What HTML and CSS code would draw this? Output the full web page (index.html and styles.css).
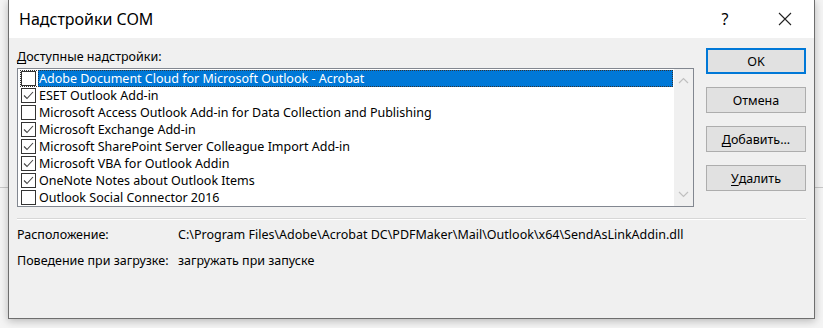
FILE: index.html
```html
<!DOCTYPE html>
<html lang="ru">
<head>
<meta charset="utf-8">
<title>Надстройки COM</title>
<link rel="stylesheet" href="styles.css">
</head>
<body>
<div class="dialog">
  <div class="titlebar">
    <div class="title">Надстройки COM</div>
    <div class="tbtn help">?</div>
    <div class="tbtn close">
      <svg width="14" height="14" viewBox="0 0 14 14"><path d="M1 1 L13 13 M13 1 L1 13" stroke="#222" stroke-width="1.1" fill="none"/></svg>
    </div>
  </div>
  <div class="content">
    <div class="top">
      <div class="leftcol">
        <div class="label"><u>Д</u>оступные надстройки:</div>
        <div class="list">
          <div class="rows">
            <div class="row selected"><span class="cb"></span><span class="txt">Adobe Document Cloud for Microsoft Outlook - Acrobat</span></div>
            <div class="row"><span class="cb"><svg width="13" height="13" viewBox="0 0 13 13"><polyline points="2,6.5 5,9.5 11,3" stroke="#444" stroke-width="1.1" fill="none"/></svg></span><span class="txt">ESET Outlook Add-in</span></div>
            <div class="row"><span class="cb"></span><span class="txt">Microsoft Access Outlook Add-in for Data Collection and Publishing</span></div>
            <div class="row"><span class="cb"><svg width="13" height="13" viewBox="0 0 13 13"><polyline points="2,6.5 5,9.5 11,3" stroke="#444" stroke-width="1.1" fill="none"/></svg></span><span class="txt">Microsoft Exchange Add-in</span></div>
            <div class="row"><span class="cb"><svg width="13" height="13" viewBox="0 0 13 13"><polyline points="2,6.5 5,9.5 11,3" stroke="#444" stroke-width="1.1" fill="none"/></svg></span><span class="txt">Microsoft SharePoint Server Colleague Import Add-in</span></div>
            <div class="row"><span class="cb"><svg width="13" height="13" viewBox="0 0 13 13"><polyline points="2,6.5 5,9.5 11,3" stroke="#444" stroke-width="1.1" fill="none"/></svg></span><span class="txt">Microsoft VBA for Outlook Addin</span></div>
            <div class="row"><span class="cb"><svg width="13" height="13" viewBox="0 0 13 13"><polyline points="2,6.5 5,9.5 11,3" stroke="#444" stroke-width="1.1" fill="none"/></svg></span><span class="txt">OneNote Notes about Outlook Items</span></div>
            <div class="row"><span class="cb"></span><span class="txt">Outlook Social Connector 2016</span></div>
          </div>
          <div class="scrollbar">
            <svg width="11" height="7" viewBox="0 0 11 7"><polyline points="1,6 5.5,1.5 10,6" stroke="#c0c0c0" stroke-width="1.2" fill="none"/></svg>
            <svg width="11" height="7" viewBox="0 0 11 7"><polyline points="1,1 5.5,5.5 10,1" stroke="#c0c0c0" stroke-width="1.2" fill="none"/></svg>
          </div>
        </div>
      </div>
      <div class="buttons">
        <div class="btn default">OK</div>
        <div class="btn">Отмена</div>
        <div class="btn"><u>Д</u>обавить...</div>
        <div class="btn"><u>У</u>далить</div>
      </div>
    </div>
    <div class="sep"></div>
    <div class="info">
      <div class="irow"><span class="ilabel">Расположение:</span><span class="ival">C:\Program Files\Adobe\Acrobat DC\PDFMaker\Mail\Outlook\x64\SendAsLinkAddin.dll</span></div>
      <div class="irow"><span class="ilabel">Поведение при загрузке:</span><span class="ival">загружать при запуске</span></div>
    </div>
  </div>
</div>
</body>
</html>
```

FILE: styles.css
```css
html, body {
  margin: 0;
  padding: 0;
}
body {
  width: 823px;
  height: 328px;
  overflow: hidden;
  background: linear-gradient(to bottom, #f4f4f4 0, #f4f4f4 187px, #c8c8c8 187px, #c8c8c8 188px, #f4f4f4 188px);
  font-family: "Noto Sans", "Open Sans", sans-serif;
  font-size: 12.5px;
  color: #000;
}
.dialog {
  margin-left: 8px;
  width: 805px;
  height: 318px;
  border: 1px solid #6e6e6e;
  border-top: none;
  background: #f0f0f0;
  box-shadow: 0 2px 8px rgba(0, 0, 0, 0.25);
  display: flex;
  flex-direction: column;
}
.titlebar {
  height: 38px;
  background: #ffffff;
  display: flex;
  align-items: center;
  flex: none;
}
.title {
  flex: 1;
  padding-left: 10px;
  font-size: 16px;
  color: #000;
}
.tbtn {
  width: 46px;
  height: 38px;
  display: flex;
  align-items: center;
  justify-content: center;
  font-size: 16px;
}
.help {
  margin-right: 14px;
}
.close {
  width: 46px;
  margin-right: 6px;
}
.content {
  flex: 1;
  display: flex;
  flex-direction: column;
  padding: 0 8px 0 8px;
}
.top {
  display: flex;
  gap: 12px;
}
.leftcol {
  width: 677px;
  display: flex;
  flex-direction: column;
}
.label {
  margin-top: 11px;
  height: 16px;
  line-height: 16px;
}
.list {
  margin-top: 3px;
  height: 137px;
  border: 1px solid #828790;
  background: #fff;
  display: flex;
}
.rows {
  flex: 1;
  padding: 1px 0 0 2px;
}
.row {
  height: 17px;
  display: flex;
  align-items: center;
  line-height: 17px;
  white-space: nowrap;
}
.row.selected {
  outline: 1px dotted #333;
  outline-offset: -1px;
  margin-right: 1px;
}
.cb {
  width: 13px;
  height: 13px;
  border: 1px solid #333;
  background: #fff;
  margin-left: 1px;
  margin-right: 2px;
  flex: none;
  display: flex;
}
.txt {
  padding-left: 1px;
  flex: 1;
  height: 17px;
}
.selected .txt {
  background: #0078d7;
  color: #fff;
  outline: 1px dotted #0a3c6e;
  outline-offset: -1px;
}
.scrollbar {
  width: 19px;
  background: #f0f0f0;
  display: flex;
  flex-direction: column;
  align-items: center;
  justify-content: space-between;
  padding: 8px 0 8px;
}
.buttons {
  padding-top: 10px;
  display: flex;
  flex-direction: column;
  gap: 13px;
}
.btn {
  width: 98px;
  height: 24px;
  border: 1px solid #adadad;
  background: #e1e1e1;
  display: flex;
  align-items: center;
  justify-content: center;
}
.btn.default {
  width: 96px;
  height: 22px;
  border: 2px solid #0078d7;
}
.sep {
  margin-top: 11px;
  height: 1px;
  background: #d7d7d7;
  border-bottom: 1px solid #ffffff;
}
.info {
  margin-top: 7px;
  display: flex;
  flex-direction: column;
  gap: 10px;
}
.irow {
  height: 16px;
  line-height: 16px;
  display: flex;
  white-space: nowrap;
}
.ilabel {
  width: 161px;
  flex: none;
}
u {
  text-decoration: underline;
  text-underline-offset: 2px;
}
```
